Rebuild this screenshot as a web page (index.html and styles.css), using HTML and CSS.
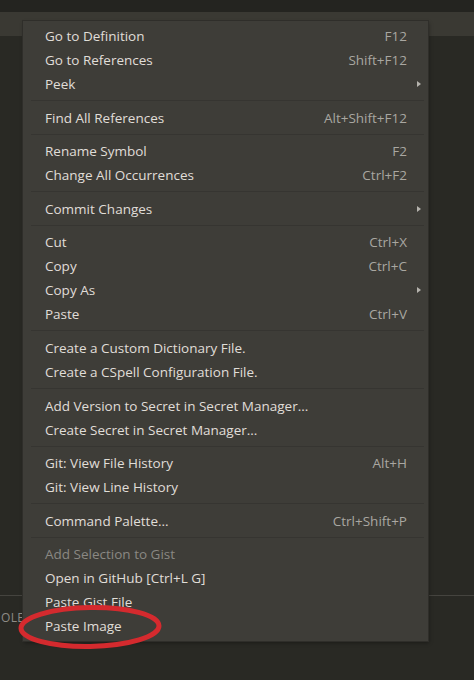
FILE: index.html
```html
<!DOCTYPE html>
<html>
<head>
<meta charset="utf-8">
<link rel="stylesheet" href="styles.css">
</head>
<body>
<div class="window">
  <div class="titlebar"></div>
  <div class="tabbar"></div>
  <div class="editor"></div>
  <div class="panel">
    <div class="panel-tabs"><span class="panel-label">OLE</span></div>
  </div>

  <div class="menu">
    <div class="item"><span class="label">Go to Definition</span><span class="key">F12</span></div>
    <div class="item"><span class="label">Go to References</span><span class="key">Shift+F12</span></div>
    <div class="item"><span class="label">Peek</span><span class="arrow"></span></div>
    <div class="sep"></div>
    <div class="item"><span class="label">Find All References</span><span class="key">Alt+Shift+F12</span></div>
    <div class="sep"></div>
    <div class="item"><span class="label">Rename Symbol</span><span class="key">F2</span></div>
    <div class="item"><span class="label">Change All Occurrences</span><span class="key">Ctrl+F2</span></div>
    <div class="sep"></div>
    <div class="item"><span class="label">Commit Changes</span><span class="arrow"></span></div>
    <div class="sep"></div>
    <div class="item"><span class="label">Cut</span><span class="key">Ctrl+X</span></div>
    <div class="item"><span class="label">Copy</span><span class="key">Ctrl+C</span></div>
    <div class="item"><span class="label">Copy As</span><span class="arrow"></span></div>
    <div class="item"><span class="label">Paste</span><span class="key">Ctrl+V</span></div>
    <div class="sep"></div>
    <div class="item"><span class="label">Create a Custom Dictionary File.</span></div>
    <div class="item"><span class="label">Create a CSpell Configuration File.</span></div>
    <div class="sep"></div>
    <div class="item"><span class="label">Add Version to Secret in Secret Manager...</span></div>
    <div class="item"><span class="label">Create Secret in Secret Manager...</span></div>
    <div class="sep"></div>
    <div class="item"><span class="label">Git: View File History</span><span class="key">Alt+H</span></div>
    <div class="item"><span class="label">Git: View Line History</span></div>
    <div class="sep"></div>
    <div class="item"><span class="label">Command Palette...</span><span class="key">Ctrl+Shift+P</span></div>
    <div class="sep"></div>
    <div class="item disabled"><span class="label">Add Selection to Gist</span></div>
    <div class="item"><span class="label">Open in GitHub [Ctrl+L G]</span></div>
    <div class="item"><span class="label">Paste Gist File</span></div>
    <div class="item"><span class="label">Paste Image</span></div>
  </div>

  <svg class="circle" width="150" height="50" viewBox="0 0 150 50">
    <ellipse cx="74" cy="23" rx="69" ry="19.5" fill="none" stroke="#d42a2e" stroke-width="5" transform="rotate(-1 74 23)"/>
  </svg>
</div>
</body>
</html>
```
FILE: styles.css
```css
html, body {
  margin: 0;
  padding: 0;
  background: #282824;
}
.window {
  position: relative;
  width: 474px;
  height: 680px;
  overflow: hidden;
  display: flex;
  flex-direction: column;
  background: #282824;
  font-family: "Open Sans", "Noto Sans", sans-serif;
}
.titlebar {
  height: 12px;
  background: #242420;
}
.tabbar {
  height: 24px;
  background: #3a3933;
}
.editor {
  height: 559px;
  background: #292924;
}
.panel {
  flex: 1;
  border-top: 1px solid #45443f;
  background: #292924;
}
.panel-tabs {
  display: flex;
  padding-top: 13px;
  padding-left: 1px;
}
.panel-label {
  font-size: 12px;
  letter-spacing: 0.3px;
  color: #8d8b86;
}
.menu {
  position: absolute;
  left: 23px;
  top: 21px;
  width: 405px;
  box-sizing: border-box;
  padding: 3px 0 3px 0;
  background: #3e3d38;
  box-shadow: 0 0 0 1px #2f2e2a, 1px 2px 4px rgba(0,0,0,0.35);
  font-size: 13.5px;
}
.item {
  height: 24px;
  display: flex;
  align-items: center;
  justify-content: space-between;
  padding: 0 21px 0 22px;
  position: relative;
  color: #e0ded8;
}
.item.disabled {
  color: #8a8883;
}
.key {
  color: #a9a7a1;
}
.arrow {
  position: absolute;
  right: 7px;
  top: 9px;
  width: 0;
  height: 0;
  border-top: 3px solid transparent;
  border-bottom: 3px solid transparent;
  border-left: 4px solid #b5b3ad;
}
.sep {
  height: 1px;
  margin: 4px 4px 4.6px 8px;
  background: #363531;
}
.circle {
  position: absolute;
  left: 16px;
  top: 604px;
}
```
